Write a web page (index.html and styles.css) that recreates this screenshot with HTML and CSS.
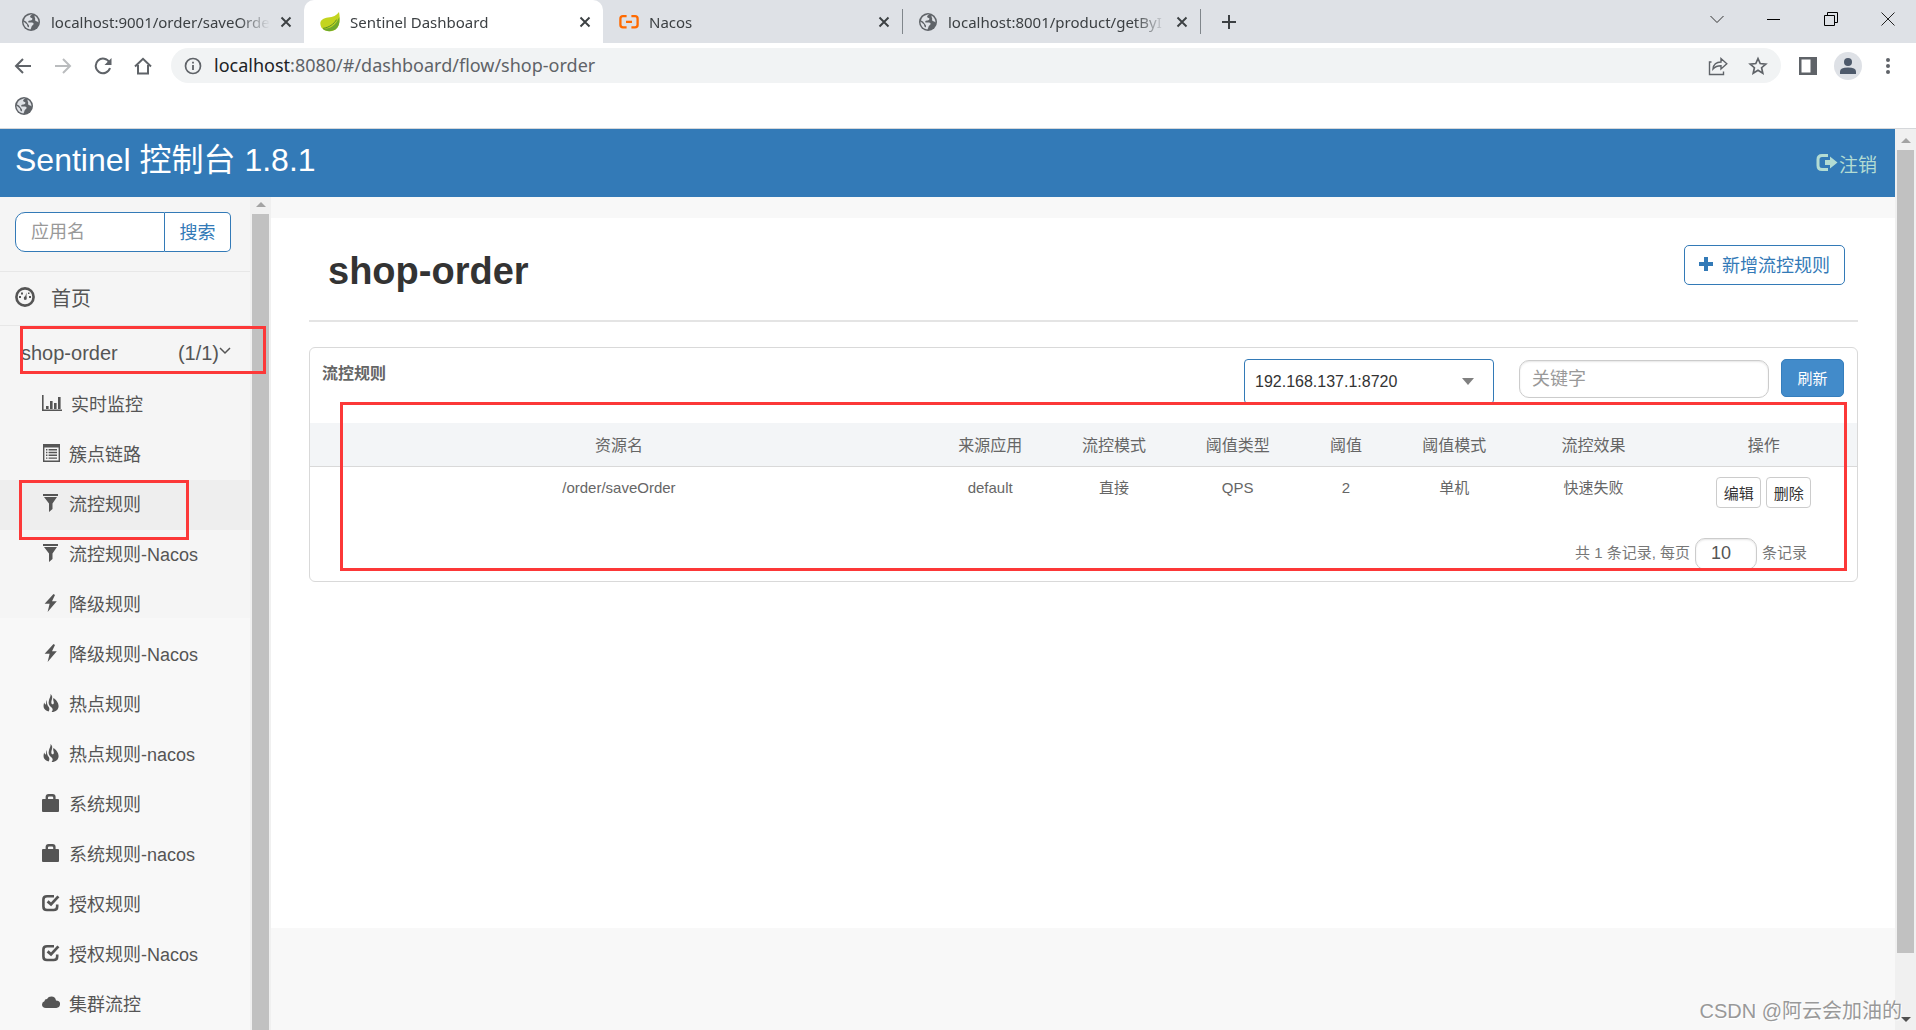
FILE: index.html
```
<!DOCTYPE html>
<html lang="zh-CN">
<head>
<meta charset="UTF-8">
<meta name="viewport" content="width=device-width, initial-scale=1.0">
<title>Sentinel Dashboard</title>
<link rel="stylesheet" href="styles.css">
</head>
<body>

<!-- shared icons -->
<svg class="sprite" aria-hidden="true">
  <symbol id="globe" viewBox="0 0 20 20"><circle cx="10" cy="10" r="9" fill="#5f6368"/><path d="M11.5 2.6 C8 4 9 5.6 10.6 6 C12.4 6.4 11 8.6 9 8.6 C7.4 8.6 7 9.6 7.4 10.4 L11 10.6 C13.4 11 12.8 13 11.4 13.4 C10.4 13.8 10.6 15.6 9.4 17.4 C5 17 2.4 13.6 2.5 9.6 L6 12.4 L6.4 14.4 L8 15.6 L8 13.6 L5 9.6 L3 8.4 C4 4.6 7.6 2.4 11.5 2.6 Z M13.4 3.4 C16 4.8 17.6 7.4 17.5 10.6 C17 9.4 15.6 9.6 14.6 9 C13.4 8 14.8 6.6 13.8 5.6 Z" fill="#dee1e6"/></symbol>
  <symbol id="cross" viewBox="0 0 12 12"><path d="M1.5 1.5 L10.5 10.5 M10.5 1.5 L1.5 10.5" stroke="#3c4043" stroke-width="1.9" fill="none"/></symbol>
  <symbol id="filter" viewBox="0 0 18 18"><path d="M1 0 H16 V2 H1 Z M2 3 H15 L10.500 9.500 V15 L7 18 V9.500 Z" fill="#555"/></symbol>
  <symbol id="flash" viewBox="0 0 18 18"><path d="M11.500 0 L2.600 9.800 H7.600 L5.600 18 L14.800 7.200 H10 L13 1 Z" fill="#555"/></symbol>
  <symbol id="fire" viewBox="0 0 18 18"><path d="M8.6 0 C12 3 9 6 9.4 9 C9.6 11 12 10.6 11.8 8.4 C11.7 7 10.8 6.4 11.4 4 C13.4 5 16.6 8.4 16.6 12 C16.6 15.4 14 18 9.6 18 C11.4 16 10.8 14.4 9 13 C7 11.6 6 9.6 7 6 C7.6 4 8.8 2.4 8.6 0 Z M5 6 C4.6 8.6 5.2 10.8 6.4 12.6 C7.4 14 8 15.6 6.6 17.4 C3 16.6 1.2 14 1.6 11 C1.8 9.6 2 9 2.2 8.4 C2.8 10 3.2 10.4 3.8 10.4 C4.6 9.6 3.6 7.6 5 6 Z" fill="#555"/></symbol>
  <symbol id="lock" viewBox="0 0 18 18"><path d="M3.6 5 V3 Q3.6 0 6.6 0 H10.6 Q13.6 0 13.6 3 V5 H16 Q17 5 17 6 V17 Q17 18 16 18 H1 Q0 18 0 17 V6 Q0 5 1 5 Z M6 5 H11.2 V3.6 Q11.2 2.4 10 2.4 H7.2 Q6 2.4 6 3.6 Z" fill="#555" fill-rule="evenodd"/></symbol>
  <symbol id="check" viewBox="0 0 18 18"><path d="M12 2.2 H5 Q1.4 2.2 1.4 5.6 V12.4 Q1.4 16 5 16 H11.6 Q15.2 16 15.2 12.4 V10.4" stroke="#555" stroke-width="2.6" fill="none"/><path d="M5.6 7.4 L9 10.4 L16.4 2.4" stroke="#555" stroke-width="2.8" fill="none"/></symbol>
  <symbol id="cloud" viewBox="0 0 18 18"><path d="M4 14 Q0 14 0 10.6 Q0 8 2.4 7.2 Q2.6 5 5 5 Q6.4 2.6 9.4 2.6 Q13.4 2.8 14 6.6 Q18.6 6.8 18 10.6 Q17.6 13.8 14.4 14 Z" fill="#555"/></symbol>
  <symbol id="chart" viewBox="0 0 20 18"><path d="M0 1 H1.6 V15.4 H20 V17 H0 Z M4 12 H6.6 V15 H4 Z M8 7 H10.6 V15 H8 Z M12 9 H14.6 V15 H12 Z M16 3 H18.6 V15 H16 Z" fill="#555"/></symbol>
  <symbol id="list" viewBox="0 0 18 18"><path d="M1 0 H18 V18 H1 Z M2.4 3.4 V16.6 H16.6 V3.4 Z M4 5 H5.4 V6.4 H4 Z M6.6 5 H15 V6.4 H6.6 Z M4 7.8 H5.4 V9.2 H4 Z M6.6 7.8 H15 V9.2 H6.6 Z M4 10.6 H5.4 V12 H4 Z M6.6 10.6 H15 V12 H6.6 Z M4 13.4 H5.4 V14.8 H4 Z M6.6 13.4 H15 V14.8 H6.6 Z" fill="#555" fill-rule="evenodd"/></symbol>
</svg>

<div class="browser">
  <!-- tab strip -->
  <div class="tab-strip">
    <div class="tab">
      <svg class="tab-icon"><use href="#globe"/></svg>
      <span class="tab-title">localhost:9001/order/saveOrde</span>
      <button class="tab-close" aria-label="Close tab"><svg width="12" height="12"><use href="#cross"/></svg></button>
    </div>
    <div class="tab active">
      <svg class="tab-icon" viewBox="0 0 20 20"><path d="M19 0 C20.6 8 19.6 14.6 15.6 17.4 C11 20.4 4 19.4 1.4 15.4 C-1.6 9.6 2 6 8 5.4 C13 5 16.6 3.6 19 0 Z" fill="#c3d41f"/><path d="M19.2 5 C20 11 18.6 15.6 15 17.8 C10.6 20 5.6 19.4 3 17 C10 17 16 13.6 19.2 5 Z" fill="#6fa92b"/><path d="M3 16.4 C9 15.6 14 12 16.6 7.6" stroke="#58912a" fill="none"/></svg>
      <span class="tab-title">Sentinel Dashboard</span>
      <button class="tab-close" aria-label="Close tab"><svg width="12" height="12"><use href="#cross"/></svg></button>
    </div>
    <div class="tab">
      <svg class="tab-icon" viewBox="0 0 20 20"><path d="M7.6 4.2 H4 Q1.4 4.2 1.4 6.8 V12.8 Q1.4 15.4 4 15.4 H7.6 M12.4 4.2 H16 Q18.6 4.2 18.6 6.8 V12.8 Q18.6 15.4 16 15.4 H12.4 M7 9.8 H13" stroke="#ff6a00" stroke-width="2.3" fill="none"/></svg>
      <span class="tab-title">Nacos</span>
      <button class="tab-close" aria-label="Close tab"><svg width="12" height="12"><use href="#cross"/></svg></button>
    </div>
    <div class="tab divided">
      <svg class="tab-icon"><use href="#globe"/></svg>
      <span class="tab-title">localhost:8001/product/getByI</span>
      <button class="tab-close" aria-label="Close tab"><svg width="12" height="12"><use href="#cross"/></svg></button>
    </div>
    <button class="new-tab" aria-label="New tab"><svg width="16" height="16" viewBox="0 0 16 16"><path d="M8 1 V15 M1 8 H15" stroke="#3c4043" stroke-width="2"/></svg></button>
    <div class="window-controls">
      <button aria-label="Search tabs"><svg width="14" height="14" viewBox="0 0 14 14"><path d="M.5 4 L7 10.5 L13.500 4" stroke="#333" fill="none"/></svg></button>
      <button aria-label="Minimize"><svg width="14" height="14" viewBox="0 0 14 14"><path d="M0 7.500 H13" stroke="#000"/></svg></button>
      <button aria-label="Restore"><svg width="14" height="14" viewBox="0 0 14 14"><path d="M.5 3.500 H10.500 V13.500 H.5 Z M3.500 3 V.5 H13.500 V10.500 H11" stroke="#000" fill="none"/></svg></button>
      <button aria-label="Close window"><svg width="14" height="14" viewBox="0 0 14 14"><path d="M.5 .5 L13.500 13.500 M13.500 .5 L.5 13.500" stroke="#222"/></svg></button>
    </div>
  </div>

  <!-- address bar -->
  <div class="toolbar">
    <button class="tool" aria-label="Back"><svg width="18" height="18" viewBox="0 0 18 18"><path d="M17 9 H2 M9 2 L2 9 L9 16" stroke="#5f6368" stroke-width="2" fill="none"/></svg></button>
    <button class="tool" aria-label="Forward"><svg width="18" height="18" viewBox="0 0 18 18"><path d="M1 9 H16 M9 2 L16 9 L9 16" stroke="#babcbe" stroke-width="2" fill="none"/></svg></button>
    <button class="tool" aria-label="Reload"><svg width="18" height="18" viewBox="0 0 18 18"><path d="M15.500 5.500 A7.300 7.300 0 1 0 16 11" stroke="#5f6368" stroke-width="2" fill="none"/><path d="M17.500 1 V8 H10.500 Z" fill="#5f6368"/></svg></button>
    <button class="tool" aria-label="Home"><svg width="18" height="18" viewBox="0 0 18 18"><path d="M1 9.500 L9 1.800 L17 9.500 M4 8 V16.500 H14 V8" stroke="#5f6368" stroke-width="2" fill="none"/></svg></button>
    <div class="omnibox">
      <svg width="18" height="18" viewBox="0 0 18 18"><circle cx="9" cy="9" r="7.500" stroke="#5f6368" stroke-width="1.700" fill="none"/><path d="M9 8 V13 M9 4.800 V6.600" stroke="#5f6368" stroke-width="1.800"/></svg>
      <span class="url"><b>localhost</b>:8080/#/dashboard/flow/shop-order</span>
      <button class="tool" aria-label="Share"><svg width="20" height="20" viewBox="0 0 20 20"><path d="M3.500 6 H1.500 V18.500 H15.500 V15.500 M5 13 C5.500 8.500 8.500 6 13 6 V2.500 L18.800 7.800 L13 13 V9.800 C9.500 9.800 7 10.800 5 13 Z" stroke="#5f6368" stroke-width="1.400" fill="none"/></svg></button>
      <button class="tool" aria-label="Bookmark"><svg width="20" height="20" viewBox="0 0 20 20"><path d="M10 2.500 L12.200 7.500 L17.800 8.100 L13.600 11.700 L14.800 17.200 L10 14.300 L5.200 17.200 L6.400 11.700 L2.200 8.100 L7.800 7.500 Z" stroke="#5f6368" stroke-width="1.700" fill="none"/></svg></button>
    </div>
    <button class="tool" aria-label="Side panel"><svg width="18" height="18" viewBox="0 0 18 18"><path d="M0 0 H18 V18 H0 Z M2.500 2.500 V15.500 H11.500 V2.500 Z" fill="#5f6368" fill-rule="evenodd"/></svg></button>
    <button class="tool" aria-label="Profile"><svg width="28" height="28" viewBox="0 0 28 28"><circle cx="14" cy="14" r="14" fill="#dee1e6"/><circle cx="14" cy="10" r="4" fill="#4e5a6b"/><path d="M6 22 V19.500 Q6 15.500 14 15.500 Q22 15.500 22 19.500 V22 Z" fill="#4e5a6b"/></svg></button>
    <button class="tool" aria-label="Menu"><svg width="18" height="18" viewBox="0 0 18 18"><circle cx="9" cy="3" r="2" fill="#5f6368"/><circle cx="9" cy="9" r="2" fill="#5f6368"/><circle cx="9" cy="15" r="2" fill="#5f6368"/></svg></button>
  </div>
  <div class="bookmarks">
    <svg width="20" height="20"><use href="#globe"/></svg>
  </div>

  <div class="viewport">
    <div class="page">
      <header class="navbar">
        <a class="brand" href="#">Sentinel 控制台 1.8.1</a>
        <a class="logout" href="#"><svg width="22" height="20" viewBox="0 0 22 20"><path d="M12 2.600 H6 Q2 2.600 2 6.600 V12.400 Q2 16.400 6 16.400 H12" stroke="#b3dcd3" stroke-width="3" fill="none"/><path d="M9 7 H14 V3.500 L21.500 9.500 L14 15.500 V12 H9 Z" fill="#b3dcd3"/></svg>注销</a>
      </header>

      <div class="layout">
        <aside class="sidebar">
          <form class="app-search">
            <input type="text" placeholder="应用名" aria-label="应用名">
            <button type="button">搜索</button>
          </form>
          <a class="nav-home" href="#"><svg width="20" height="20" viewBox="0 0 20 20"><circle cx="10" cy="10" r="8.600" stroke="#555" stroke-width="2.600" fill="none"/><path d="M9 12.800 L11.600 5.600 L11.400 12.800 Z" fill="#555"/><circle cx="10.200" cy="11" r="1.400" fill="#555"/><path d="M4 9 H6 V11 H4 Z M6 5.500 H8 V7.500 H6 Z M14 9 H16 V11 H14 Z M13 5.500 H14.500 V7 H13 Z" fill="#555"/></svg>首页</a>
          <a class="nav-app" href="#"><span>shop-order</span><span class="nav-count">(1/1)<svg width="12" height="14" viewBox="0 0 12 14"><path d="M1 2 L6 7 L11 2" stroke="#555" stroke-width="1.500" fill="none"/></svg></span></a>
          <nav class="nav-list">
            <a class="wide" href="#"><svg><use href="#chart"/></svg>实时监控</a>
            <a href="#"><svg><use href="#list"/></svg>簇点链路</a>
            <a class="active" href="#"><svg><use href="#filter"/></svg>流控规则</a>
            <a href="#"><svg><use href="#filter"/></svg>流控规则-Nacos</a>
            <a href="#"><svg><use href="#flash"/></svg>降级规则</a>
            <a href="#"><svg><use href="#flash"/></svg>降级规则-Nacos</a>
            <a href="#"><svg><use href="#fire"/></svg>热点规则</a>
            <a href="#"><svg><use href="#fire"/></svg>热点规则-nacos</a>
            <a href="#"><svg><use href="#lock"/></svg>系统规则</a>
            <a href="#"><svg><use href="#lock"/></svg>系统规则-nacos</a>
            <a href="#"><svg><use href="#check"/></svg>授权规则</a>
            <a href="#"><svg><use href="#check"/></svg>授权规则-Nacos</a>
            <a href="#"><svg><use href="#cloud"/></svg>集群流控</a>
          </nav>
          <div class="mark mark-app"></div>
          <div class="mark mark-rule"></div>
        </aside>
        <div class="scrollbar side"><span class="arrow-up"></span><span class="thumb"></span></div>

        <main class="content">
          <div class="panel">
            <div class="page-head">
              <h1>shop-order</h1>
              <button class="btn-add"><svg width="14" height="14" viewBox="0 0 14 14"><path d="M7 0 V14 M0 7 H14" stroke="#337ab7" stroke-width="4"/></svg>新增流控规则</button>
            </div>
            <section class="card">
              <div class="card-head">
                <h2>流控规则</h2>
                <div class="machine">
                  <select aria-label="机器"><option>192.168.137.1:8720</option></select>
                </div>
                <input class="keyword" type="text" placeholder="关键字" aria-label="关键字">
                <button class="btn-refresh">刷新</button>
              </div>
              <table class="rules">
                <colgroup><col class="c40"><col class="c8"><col class="c8"><col class="c8"><col class="c6"><col class="c8"><col class="c10"><col class="c12"></colgroup>
                <thead>
                  <tr><th>资源名</th><th>来源应用</th><th>流控模式</th><th>阈值类型</th><th>阈值</th><th>阈值模式</th><th>流控效果</th><th>操作</th></tr>
                </thead>
                <tbody>
                  <tr>
                    <td>/order/saveOrder</td><td>default</td><td>直接</td><td>QPS</td><td>2</td><td>单机</td><td>快速失败</td>
                    <td class="actions"><button>编辑</button><button>删除</button></td>
                  </tr>
                </tbody>
              </table>
              <div class="pager">
                <label for="pageSize">共 1 条记录, 每页</label>
                <input type="text" id="pageSize" value="10">
                <span>条记录</span>
              </div>
              <div class="mark mark-table"></div>
            </section>
          </div>
        </main>
      </div>
    </div>
    <div class="scrollbar main"><span class="arrow-up"></span><span class="thumb"></span><span class="arrow-down"></span></div>
  </div>
  <div class="watermark">CSDN @阿云会加油的</div>
</div>

</body>
</html>
```
FILE: styles.css
```
* {
  box-sizing: border-box;
}

body {
  margin: 0;
  font-family: "Liberation Sans", "Noto Sans CJK SC", sans-serif;
  font-size: 16px;
  color: #555;
}

a {
  color: inherit;
  text-decoration: none;
}

button,
input,
select {
  margin: 0;
  padding: 0;
  border: none;
  background: none;
  font-family: inherit;
  font-size: 18px;
}

button {
  display: flex;
  align-items: center;
  justify-content: center;
  flex-shrink: 0;
  cursor: pointer;
}

.sprite {
  display: none;
}

.browser {
  position: relative;
  display: flex;
  flex-direction: column;
  height: 100vh;
  overflow: hidden;
  background: #fff;
}

/* Browser chrome */
.tab-strip {
  display: flex;
  height: 43px;
  flex-shrink: 0;
  padding-left: 5px;
  background: #dee1e6;
  font-family: "Noto Sans", sans-serif;
  font-size: 15px;
  color: #3c4043;
}

.tab {
  display: flex;
  align-items: center;
  gap: 10px;
  width: 299px;
  padding: 0 12px 0 16px;
}

.tab.active {
  border-radius: 10px 10px 0 0;
  background: #fff;
}

.tab.divided {
  border-left: 1px solid #80868b;
  border-right: 1px solid #80868b;
  height: 25px;
  margin-top: 9px;
  padding: 0 12px 0 15px;
}

.tab-icon {
  width: 20px;
  height: 20px;
  flex-shrink: 0;
}

.tab-title {
  flex: 1;
  overflow: hidden;
  white-space: nowrap;
  -webkit-mask-image: linear-gradient(to left, transparent, #000 32px);
  mask-image: linear-gradient(to left, transparent, #000 32px);
}

.new-tab {
  width: 56px;
}

.window-controls {
  display: flex;
  height: 37px;
  margin-left: auto;
}

.window-controls button {
  width: 57px;
}

.toolbar {
  display: flex;
  align-items: center;
  height: 45px;
  flex-shrink: 0;
  padding: 0 8px 0 3px;
}

.tool {
  width: 40px;
  height: 35px;
}

.omnibox {
  display: flex;
  align-items: center;
  flex: 1;
  height: 35px;
  margin: 0 7px 0 8px;
  padding: 0 3px 0 13px;
  border-radius: 18px;
  background: #f1f3f4;
}

.url {
  flex: 1;
  padding: 0 0 2px 12px;
  font-family: "Noto Sans", sans-serif;
  font-size: 18px;
  color: #5f6368;
}

.url b {
  font-weight: normal;
  color: #202124;
}

.bookmarks {
  display: flex;
  height: 41px;
  flex-shrink: 0;
  padding: 8px 14px;
  border-bottom: 1px solid #d5d7da;
}

.viewport {
  display: flex;
  flex: 1;
  min-height: 0;
}

.page {
  display: flex;
  flex-direction: column;
  flex: 1;
  min-width: 0;
}

/* Scrollbars */
.scrollbar {
  display: flex;
  flex-direction: column;
  align-items: center;
  width: 21px;
  flex-shrink: 0;
  background: #f0f0f0;
}

.scrollbar .thumb {
  width: 17px;
  flex: 1;
  background: #c1c1c1;
}

.arrow-up {
  margin: 5px 0 7px;
  border: 5px solid transparent;
  border-top: none;
  border-bottom-color: #a3a3a3;
}

.scrollbar.main .arrow-up {
  margin: 9px 0 7px;
}

.arrow-down {
  margin: 64px 0 8px;
  border: 5px solid transparent;
  border-bottom: none;
  border-top-color: #505050;
}

/* Sentinel header */
.navbar {
  display: flex;
  align-items: center;
  justify-content: space-between;
  height: 68px;
  flex-shrink: 0;
  padding: 0 18px 0 15px;
  background: #337ab7;
}

.brand {
  padding-bottom: 12px;
  font-size: 32px;
  color: #fff;
}

.logout {
  display: flex;
  align-items: center;
  gap: 1px;
  font-size: 19px;
  color: #b3dcd3;
}

.layout {
  display: flex;
  flex: 1;
  min-height: 0;
}

/* Sidebar */
.sidebar {
  position: relative;
  width: 250px;
  flex-shrink: 0;
  background: linear-gradient(#f5f5f5 421px, #f8f8f8 421px);
}

.app-search {
  display: flex;
  padding: 15px 19px 19px 15px;
  border-bottom: 1px solid #e7e7e7;
}

.app-search input {
  flex: 1;
  min-width: 0;
  height: 40px;
  padding: 0 15px;
  border: 1px solid #337ab7;
  border-radius: 10px 0 0 10px;
  background: #fff;
}

.app-search button {
  width: 66px;
  padding-bottom: 2px;
  border: 1px solid #337ab7;
  border-left: none;
  border-radius: 0 5px 5px 0;
  background: #fff;
  color: #337ab7;
}

input::placeholder {
  color: #999;
}

.nav-home {
  display: flex;
  align-items: center;
  gap: 16px;
  height: 54px;
  padding: 0 0 3px 15px;
  border-bottom: 1px solid #e7e7e7;
  font-size: 20px;
}

.nav-app {
  display: flex;
  align-items: center;
  justify-content: space-between;
  height: 54px;
  padding: 0 19px 0 21px;
  font-size: 20px;
}

.nav-list a {
  display: flex;
  align-items: center;
  gap: 9px;
  height: 50px;
  padding: 0 0 4px 42px;
  font-size: 18px;
}

.nav-list svg {
  width: 18px;
  height: 18px;
}

.nav-list .wide svg {
  width: 20px;
}

.nav-list .active {
  background: #eee;
}

/* Content */
.content {
  display: flex;
  flex: 1;
  min-width: 0;
  padding: 21px 0 102px;
  background: #f8f8f8;
}

.panel {
  flex: 1;
  padding: 0 37px 0 38px;
  background: #fff;
}

.page-head {
  display: flex;
  align-items: center;
  justify-content: space-between;
  height: 104px;
  margin-bottom: 25px;
  padding: 0 13px 0 19px;
  border-bottom: 2px solid #e4e4e4;
}

h1 {
  margin: 4px 0 0;
  font-size: 38px;
  color: #333;
}

.btn-add {
  gap: 9px;
  height: 40px;
  margin-bottom: 8px;
  padding: 0 14px 2px;
  border: 1px solid #337ab7;
  border-radius: 5px;
  color: #337ab7;
}

.card {
  position: relative;
  border: 1px solid #d9d9d9;
  border-radius: 6px;
  color: #666;
}

.card-head {
  display: flex;
  align-items: flex-start;
  height: 75px;
  padding: 11px 13px 0 12px;
}

h2 {
  flex: 1;
  margin: 1px 0 0;
  font-size: 16px;
}

.machine {
  position: relative;
  width: 250px;
  margin-right: 25px;
}

.machine select {
  width: 100%;
  height: 45px;
  padding: 0 10px;
  border: 1px solid #337ab7;
  border-radius: 4px;
  appearance: none;
  background: #fff;
  font-size: 16px;
  color: #333;
}

.machine::after {
  content: "";
  position: absolute;
  right: 20px;
  top: 19px;
  border: 6px solid transparent;
  border-top: 7px solid #808080;
  border-bottom: none;
}

.keyword {
  width: 250px;
  height: 38px;
  margin: 1px 12px 0 0;
  padding: 0 12px;
  border: 1px solid #ccc;
  border-radius: 10px;
  box-shadow: inset 0 1px 2px rgba(0, 0, 0, 0.1);
}

.btn-refresh {
  width: 63px;
  height: 38px;
  padding-bottom: 2px;
  border: 1px solid #357ebd;
  border-radius: 5px;
  background: #428bca;
  font-size: 15px;
  color: #fff;
}

.rules {
  width: 100%;
  table-layout: fixed;
  border-collapse: collapse;
}

.c40 { width: 40%; }
.c12 { width: 12%; }
.c10 { width: 10%; }
.c8 { width: 8%; }
.c6 { width: 6%; }

.rules th {
  height: 43px;
  padding: 0 1px 1px 0;
  border-bottom: 1px solid #d9d9d9;
  background: #f3f5f7;
  font-weight: normal;
}

.rules td {
  padding: 10px 1px 10px 0;
  vertical-align: top;
  text-align: center;
  font-size: 15px;
  line-height: 22px;
}

.rules .actions {
  display: flex;
  justify-content: center;
  gap: 5px;
}

.actions button {
  width: 45px;
  height: 31px;
  border: 1px solid #ccc;
  border-radius: 4px;
  font-size: 15px;
  color: #333;
}

.pager {
  display: flex;
  justify-content: flex-end;
  gap: 5px;
  padding: 20px 50px 11px;
  font-size: 15px;
  line-height: 30px;
  color: #777;
}

.pager input {
  width: 62px;
  height: 32px;
  padding: 0 15px;
  border: 1px solid #ccc;
  border-radius: 10px;
  box-shadow: inset 0 1px 2px rgba(0, 0, 0, 0.1);
  color: #555;
}

/* Highlight frames */
.mark {
  position: absolute;
  z-index: 2;
  border: 3px solid #fc3838;
  pointer-events: none;
}

.mark-app {
  left: 20px;
  top: 129px;
  width: 246px;
  height: 48px;
}

.mark-rule {
  left: 19px;
  top: 283px;
  width: 170px;
  height: 60px;
}

.mark-table {
  inset: 54px 10px 10px 30px;
}

.watermark {
  position: absolute;
  right: 14px;
  bottom: 5px;
  font-family: "Liberation Sans", "Noto Sans CJK SC", sans-serif;
  font-size: 20px;
  line-height: 28px;
  color: #999;
  text-shadow: 1px 1px 0 #fff;
}
```
